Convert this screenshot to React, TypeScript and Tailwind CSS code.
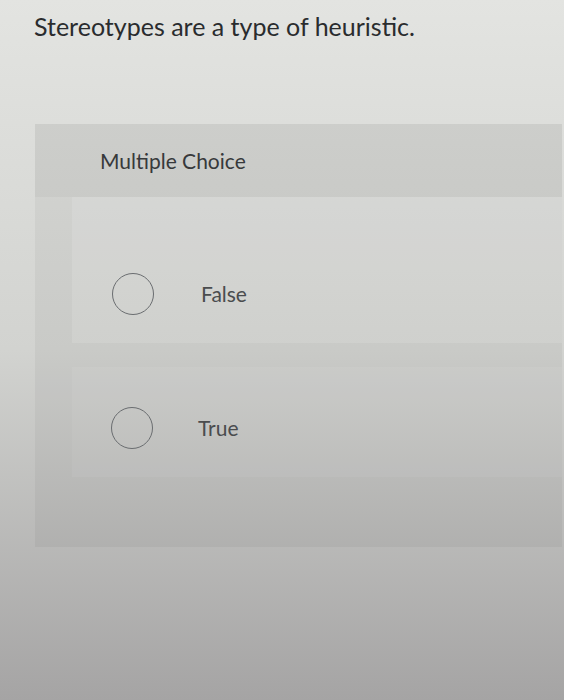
import React from "react";

// Single multiple-choice question card
const OPTIONS = ["False", "True"];

function Radio() {
  return (
    <span className="block w-[42px] h-[42px] shrink-0 rounded-full border-[1.5px] border-[#6a6d70]" />
  );
}

export default function App() {
  return (
    <div
      className="w-[564px] h-[700px] overflow-hidden bg-gradient-to-b from-[#e3e4e1] via-[#d2d3d0] to-[#a5a4a4] text-[#2e3032]"
      style={{ fontFamily: "Lato, 'Open Sans', sans-serif" }}
    >
      <h1 className="pt-[10px] pl-[34px] text-[25px] leading-[32px] font-normal text-[#2a2c2e]">
        Stereotypes are a type of heuristic.
      </h1>

      <div className="ml-[35px] mr-[2px] mt-[82px] h-[423px] bg-black/[0.04]">
        {/* header */}
        <div className="h-[73px] flex items-center pl-[65px] bg-black/[0.03]">
          <span className="text-[21px] text-[#37393b]">Multiple Choice</span>
        </div>

        {/* answers */}
        <div className="pl-[37px] flex flex-col gap-[24px]">
          <div className="h-[146px] pt-[76px] pl-[40px] flex items-start gap-[47px] bg-white/[0.12]">
            <Radio />
            <span className="text-[21px] leading-[42px] text-[#4a4c4e]">{OPTIONS[0]}</span>
          </div>
          <div className="h-[110px] pt-[40px] pl-[39px] flex items-start gap-[45px] bg-white/[0.05]">
            <Radio />
            <span className="text-[21px] leading-[42px] text-[#4a4c4e]">{OPTIONS[1]}</span>
          </div>
        </div>
      </div>
    </div>
  );
}
